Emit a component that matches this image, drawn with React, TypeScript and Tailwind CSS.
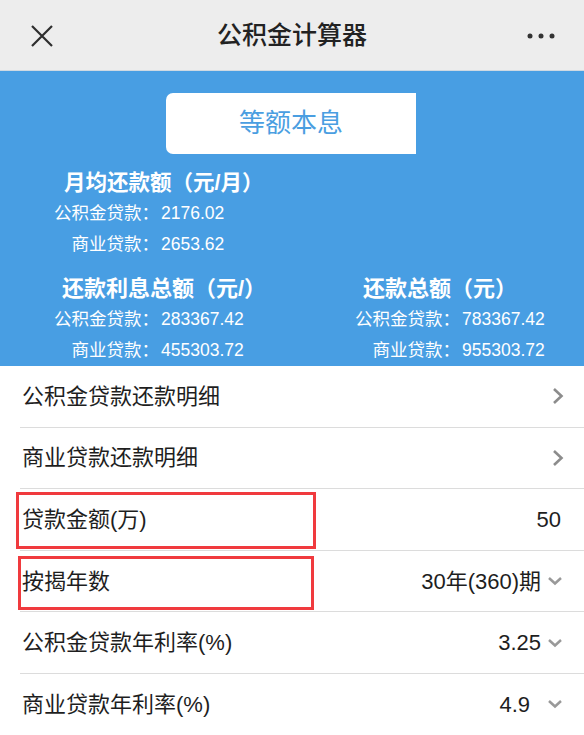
const font = "font-['Liberation_Sans','Noto_Sans_CJK_SC',sans-serif]";

const monthly = [
  { label: "公积金贷款：", value: "2176.02" },
  { label: "商业贷款：", value: "2653.62" },
];

const interest = [
  { label: "公积金贷款：", value: "283367.42" },
  { label: "商业贷款：", value: "455303.72" },
];

const total = [
  { label: "公积金贷款：", value: "783367.42" },
  { label: "商业贷款：", value: "955303.72" },
];

type Row = { label: string; value?: string; kind: "link" | "input" | "select"; pad?: string };

const rows: Row[] = [
  { label: "公积金贷款还款明细", kind: "link" },
  { label: "商业贷款还款明细", kind: "link" },
  { label: "贷款金额(万)", value: "50", kind: "input" },
  { label: "按揭年数", value: "30年(360)期", kind: "select" },
  { label: "公积金贷款年利率(%)", value: "3.25", kind: "select" },
  { label: "商业贷款年利率(%)", value: "4.9", kind: "select", pad: "mr-[11px]" },
];

function StatLines({ items }: { items: { label: string; value: string }[] }) {
  return (
    <>
      {items.map((it) => (
        <div key={it.label} className="flex h-[31px] items-center text-[17.5px] leading-[31px] text-white">
          <span className="w-[105px] text-right">{it.label}</span>
          <span className="ml-[2px]">{it.value}</span>
        </div>
      ))}
    </>
  );
}

function ChevronRight() {
  return (
    <svg width="12" height="18" viewBox="0 0 12 18" className="mr-[20px] shrink-0">
      <path d="M2 2 L9.5 9 L2 16" fill="none" stroke="#8c8c8c" strokeWidth="2.6" />
    </svg>
  );
}

function ChevronDown() {
  return (
    <svg width="16" height="10" viewBox="0 0 16 10" className="ml-[6px] mr-[21px] shrink-0">
      <path d="M2 2 L8 7.5 L14 2" fill="none" stroke="#999" strokeWidth="2.5" />
    </svg>
  );
}

export default function App() {
  return (
    <div className={`w-[584px] h-[735px] overflow-hidden bg-white ${font}`}>
      {/* top bar */}
      <div className="grid h-[71px] grid-cols-[1fr_auto_1fr] items-center border-b border-[#cfd9e2] bg-[#ededed] pt-[2px]">
        <svg width="22" height="22" viewBox="0 0 22 22" className="ml-[31px]">
          <path d="M1 1 L21 21 M21 1 L1 21" stroke="#2e2e2e" strokeWidth="2.2" />
        </svg>
        <div className="text-[25px] font-medium text-[#222]">公积金计算器</div>
        <svg width="28" height="6" viewBox="0 0 28 6" className="mr-[29px] justify-self-end">
          <circle cx="3" cy="3" r="2.5" fill="#333" />
          <circle cx="14" cy="3" r="2.5" fill="#333" />
          <circle cx="25" cy="3" r="2.5" fill="#333" />
        </svg>
      </div>

      {/* summary */}
      <div className="h-[295px] bg-[#489ee3] pt-[22px]">
        <div className="ml-[166px] flex h-[61px] w-[250px] items-center justify-center rounded-l-[7px] bg-white text-[26px] text-[#4a9ee1]">
          等额本息
        </div>

        <div className="mt-[14px] pl-[54px]">
          <div className="h-[30px] pl-[10px] text-[21.5px] font-bold leading-[30px] text-white">月均还款额（元/月）</div>
          <StatLines items={monthly} />
        </div>

        <div className="mt-[13.5px] flex">
          <div className="w-[355px] pl-[54px]">
            <div className="h-[30px] pl-[8px] text-[22px] font-bold leading-[30px] text-white">还款利息总额（元/）</div>
            <StatLines items={interest} />
          </div>
          <div>
            <div className="h-[30px] pl-[8px] text-[22px] font-bold leading-[30px] text-white">还款总额（元）</div>
            <StatLines items={total} />
          </div>
        </div>
      </div>

      {/* list */}
      <div className="relative">
        {rows.map((r) => (
          <div
            key={r.label}
            className="ml-[20px] flex h-[61.6px] items-center border-b border-[#dcdcdc] text-[22px] text-[#1e1e1e]"
          >
            <span className="flex-1 pl-[2px]">{r.label}</span>
            {r.kind === "link" && <ChevronRight />}
            {r.kind === "input" && <span className="mr-[23px]">{r.value}</span>}
            {r.kind === "select" && (
              <>
                <span className={r.pad}>{r.value}</span>
                <ChevronDown />
              </>
            )}
          </div>
        ))}

        {/* annotation boxes */}
        <div className="absolute left-[16px] top-[126px] h-[57px] w-[300px] border-[3px] border-[#f03a3e]" />
        <div className="absolute left-[18px] top-[190px] h-[54px] w-[296px] border-[3px] border-[#f03a3e]" />
      </div>
    </div>
  );
}
